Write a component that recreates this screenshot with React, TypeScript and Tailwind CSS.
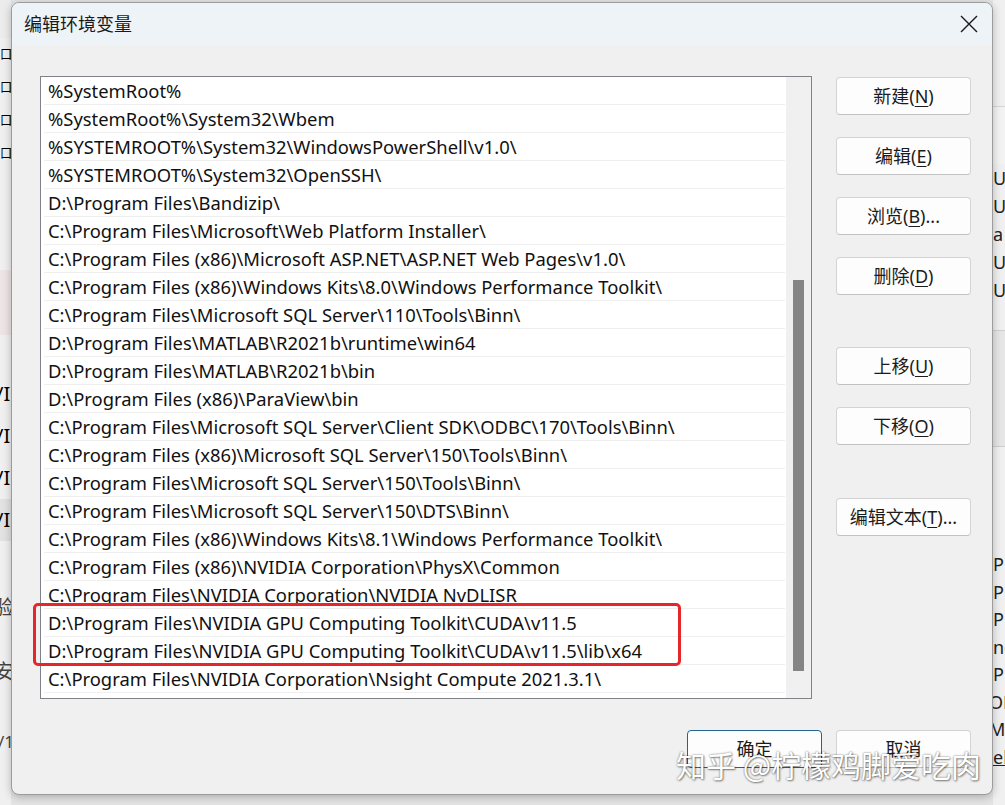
const paths = [
  "%SystemRoot%",
  "%SystemRoot%\\System32\\Wbem",
  "%SYSTEMROOT%\\System32\\WindowsPowerShell\\v1.0\\",
  "%SYSTEMROOT%\\System32\\OpenSSH\\",
  "D:\\Program Files\\Bandizip\\",
  "C:\\Program Files\\Microsoft\\Web Platform Installer\\",
  "C:\\Program Files (x86)\\Microsoft ASP.NET\\ASP.NET Web Pages\\v1.0\\",
  "C:\\Program Files (x86)\\Windows Kits\\8.0\\Windows Performance Toolkit\\",
  "C:\\Program Files\\Microsoft SQL Server\\110\\Tools\\Binn\\",
  "D:\\Program Files\\MATLAB\\R2021b\\runtime\\win64",
  "D:\\Program Files\\MATLAB\\R2021b\\bin",
  "D:\\Program Files (x86)\\ParaView\\bin",
  "C:\\Program Files\\Microsoft SQL Server\\Client SDK\\ODBC\\170\\Tools\\Binn\\",
  "C:\\Program Files (x86)\\Microsoft SQL Server\\150\\Tools\\Binn\\",
  "C:\\Program Files\\Microsoft SQL Server\\150\\Tools\\Binn\\",
  "C:\\Program Files\\Microsoft SQL Server\\150\\DTS\\Binn\\",
  "C:\\Program Files (x86)\\Windows Kits\\8.1\\Windows Performance Toolkit\\",
  "C:\\Program Files (x86)\\NVIDIA Corporation\\PhysX\\Common",
  "C:\\Program Files\\NVIDIA Corporation\\NVIDIA NvDLISR",
  "D:\\Program Files\\NVIDIA GPU Computing Toolkit\\CUDA\\v11.5",
  "D:\\Program Files\\NVIDIA GPU Computing Toolkit\\CUDA\\v11.5\\lib\\x64",
  "C:\\Program Files\\NVIDIA Corporation\\Nsight Compute 2021.3.1\\",
];

const font = "font-['Segoe_UI','Noto_Sans','Noto_Sans_CJK_SC',sans-serif]";

function Btn({ label, hint, tail = "" }: { label: string; hint: string; tail?: string }) {
  return (
    <button className="flex h-[38px] w-[135px] items-center justify-center rounded-[4px] border border-[#d3d3d3] border-b-[#c2c2c2] bg-[#fdfdfd] text-[18px] text-[#1b1b1b]">
      {label}(<span className="underline underline-offset-[3px]">{hint}</span>){tail}
    </button>
  );
}

export default function App() {
  return (
    <div className={`relative h-[805px] w-[1005px] overflow-hidden bg-[#e4e4e4] ${font}`}>
      {/* window behind, left edge */}
      <div className="absolute left-0 top-0 flex h-full w-[11px] flex-col overflow-hidden whitespace-nowrap bg-[#f0f0f0] leading-none text-black">
        <div className="h-[38px] shrink-0 bg-[#ececec]" />
        <div className="flex shrink-0 flex-col text-[12px] leading-[33px] tracking-[-3px]">
          <span>口口</span>
          <span>口口</span>
          <span>口口</span>
          <span>口口</span>
        </div>
        <div className="h-[100px] shrink-0" />
        <div className="h-[65px] shrink-0 bg-[#ede5e5]" />
        <div className="h-[38px] shrink-0" />
        <div className="-ml-[4px] flex shrink-0 flex-col text-[20px] leading-[42px]">
          <span>/I</span>
          <span>/I</span>
          <span>/I</span>
          <span className="bg-[#e2e2e2]">/I</span>
        </div>
        <div className="-ml-[6px] flex shrink-0 flex-col gap-[38px] pt-[54px] text-[20px] leading-[26px] text-[#444]">
          <span>验</span>
          <span>安</span>
          <span className="ml-[4px] mt-[6px] text-[17px]">/1</span>
        </div>
      </div>

      {/* window behind, right edge */}
      <div className="absolute right-0 top-0 flex h-full w-[12px] flex-col overflow-hidden whitespace-nowrap bg-[#f0f0f0] text-[18px] leading-[28px] text-[#222]">
        <div className="h-[107px] shrink-0 border-b border-[#d6d6d6]" />
        <div className="h-[57px] shrink-0 bg-[#f3f3f3]" />
        <div className="flex shrink-0 flex-col leading-[28px]">
          <span>U</span>
          <span>U</span>
          <span>a</span>
          <span>U</span>
          <span>U</span>
        </div>
        <div className="mt-[26px] h-[117px] shrink-0 border-y border-[#cfcfcf] bg-[#e6e6e6]" />
        <div className="h-[104px] shrink-0" />
        <div className="flex shrink-0 flex-col leading-[27.5px]">
          <span>P</span>
          <span>P</span>
          <span>P</span>
          <span>ne</span>
          <span>P</span>
          <span className="-ml-[4px]">ON</span>
          <span className="-ml-[4px]">MD</span>
          <span className="underline">el</span>
        </div>
      </div>

      {/* dialog */}
      <div className="absolute left-[11px] top-[2px] flex h-[793px] w-[982px] flex-col overflow-hidden rounded-[8px] border border-[#9c9c9c] bg-[#f0f0f0] shadow-[0_2px_8px_rgba(0,0,0,0.25)]">
        <div className="flex h-[42px] shrink-0 items-center justify-between bg-[#eef3f7] pl-[12px] pr-[14px]">
          <span className="text-[18px] text-[#1a1a1a]">编辑环境变量</span>
          <svg width="18" height="18" viewBox="0 0 18 18">
            <path d="M1 1L17 17M17 1L1 17" stroke="#1a1a1a" strokeWidth="1.4" fill="none" />
          </svg>
        </div>

        <div className="flex flex-1 flex-col pl-[28px] pr-[21px] pt-[31px]">
          <div className="flex gap-[24px]">
            <div className="relative flex h-[623px] w-[773px] border border-[#7f8388] bg-white">
              <div className="flex-1 pl-[3px] pr-[1px]">
                {paths.map((p) => (
                  <div
                    key={p}
                    className="flex h-[28px] items-center whitespace-nowrap border-b border-[#efefef] pl-[4px] pt-[1px] text-[18.4px] text-[#111]"
                  >
                    {p}
                  </div>
                ))}
              </div>
              <div className="w-[25px] bg-[#f0f0f0] pl-[7px] pt-[203px]">
                <div className="h-[391px] w-[11px] bg-[#858585]" />
              </div>
              <div className="absolute left-[-8px] top-[526px] h-[63px] w-[648px] rounded-[5px] border-[3px] border-[#e5262b]" />
            </div>

            <div className="flex flex-col pt-[1px]">
              <Btn label="新建" hint="N" />
              <div className="mt-[22px]">
                <Btn label="编辑" hint="E" />
              </div>
              <div className="mt-[22px]">
                <Btn label="浏览" hint="B" tail="..." />
              </div>
              <div className="mt-[22px]">
                <Btn label="删除" hint="D" />
              </div>
              <div className="mt-[52px]">
                <Btn label="上移" hint="U" />
              </div>
              <div className="mt-[22px]">
                <Btn label="下移" hint="O" />
              </div>
              <div className="mt-[53px]">
                <Btn label="编辑文本" hint="T" tail="..." />
              </div>
            </div>
          </div>

          <div className="mt-[31px] flex justify-end gap-[14px]">
            <button className="flex h-[38px] w-[135px] items-center justify-center rounded-[4px] border border-[#22648f] bg-[#fdfdfd] text-[18px] text-[#1b1b1b]">
              确定
            </button>
            <button className="flex h-[38px] w-[135px] items-center justify-center rounded-[4px] border border-[#d3d3d3] border-b-[#c2c2c2] bg-[#fdfdfd] text-[18px] text-[#1b1b1b]">
              取消
            </button>
          </div>
        </div>
      </div>

      {/* watermark */}
      <div className="pointer-events-none absolute left-[676px] top-[744px] font-['Noto_Sans_CJK_SC',sans-serif] text-[30px] leading-[40px] text-white [text-shadow:0_0_2px_rgba(0,0,0,0.55),1px_1px_2px_rgba(0,0,0,0.4)]">
        知乎 @柠檬鸡脚爱吃肉
      </div>
    </div>
  );
}
